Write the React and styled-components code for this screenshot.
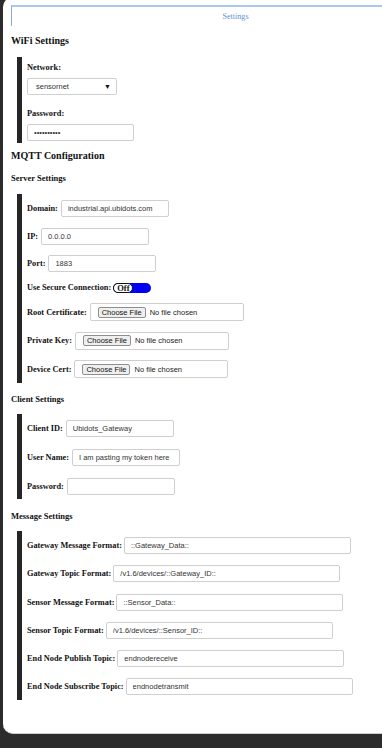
import React from "react";
import styled, { createGlobalStyle } from "styled-components";

const Global = createGlobalStyle`
  html, body { margin: 0; padding: 0; background: #2c2c2c; overflow: hidden; }
  #root { width: 382px; height: 748px; overflow: hidden; }
`;

const Card = styled.div`
  box-sizing: border-box;
  margin: -3px 0 0 3px;
  width: 460px;
  height: 737px;
  background: #fff;
  border-radius: 10px;
  border-bottom: 1px solid #cfcfcf;
  padding: 8px 0 0 8px;
  font-family: "Liberation Serif", "Times New Roman", serif;
  color: #111;
`;

const Tab = styled.div`
  box-sizing: border-box;
  width: 448px;
  height: 21px;
  border-top: 2px solid #a8c8ee;
  border-left: 1px solid #86acdc;
  color: #5f92d6;
  font-size: 8.1px;
  display: flex;
  align-items: center;
  justify-content: center;
`;

const Heading = styled.div`
  font-weight: bold;
  font-size: ${(p) => (p.$small ? "8.5px" : "10px")};
  line-height: 12px;
  height: 12px;
  margin-top: ${(p) => p.$mt}px;
`;

const Block = styled.div`
  margin: ${(p) => p.$mt}px 0 0 6px;
  border-left: 5px solid #262626;
  padding: ${(p) => p.$pt}px 0 ${(p) => p.$pb}px 5px;
  display: flex;
  flex-direction: column;
  gap: ${(p) => p.$gap}px;
`;

const StackLabel = styled.div`
  font-weight: bold;
  font-size: 8.4px;
  line-height: 12px;
  height: 12px;
  margin-bottom: 4px;
`;

const Field = styled.div`
  display: flex;
  flex-direction: column;
`;

const Row = styled.div`
  display: flex;
  align-items: center;
  height: ${(p) => p.$h || 17}px;
`;

const Label = styled.span`
  font-weight: bold;
  font-size: 8.3px;
  white-space: nowrap;
  margin-right: ${(p) => p.$gap ?? 3}px;
`;

const TextInput = styled.input`
  box-sizing: border-box;
  width: ${(p) => p.$w}px;
  height: 17px;
  border: 1px solid #cfcfcf;
  border-radius: 2px;
  padding: 0 0 0 6px;
  margin: 0;
  font-family: "Liberation Sans", Arial, sans-serif;
  font-size: 7.5px;
  color: #333;
  background: #fff;
  outline: none;
`;

const SelectBox = styled.div`
  box-sizing: border-box;
  width: 90px;
  height: 17px;
  border: 1px solid #cfcfcf;
  border-radius: 2px;
  padding: 0 5px 0 8px;
  display: flex;
  align-items: center;
  justify-content: space-between;
  font-family: "Liberation Sans", Arial, sans-serif;
  font-size: 7.5px;
  color: #333;
`;

const Arrow = styled.span`
  font-size: 7px;
  color: #111;
`;

const FileBox = styled.div`
  box-sizing: border-box;
  width: 154px;
  height: 18px;
  border: 1px solid #cfcfcf;
  border-radius: 2px;
  padding: 0 0 0 7px;
  display: flex;
  align-items: center;
  gap: 4px;
  font-family: "Liberation Sans", Arial, sans-serif;
  font-size: 7.5px;
  color: #222;
`;

const FileButton = styled.span`
  box-sizing: border-box;
  height: 11px;
  padding: 0 3px;
  display: flex;
  align-items: center;
  background: #efefef;
  border: 1px solid #8f8f8f;
  border-radius: 2px;
  color: #111;
`;

const Toggle = styled.span`
  box-sizing: border-box;
  width: 38px;
  height: 10px;
  border-radius: 6px;
  background: #0000f5;
  display: flex;
  align-items: center;
`;

const Knob = styled.span`
  box-sizing: border-box;
  height: 10px;
  padding: 0 3px;
  border-radius: 6px;
  background: #fff;
  border: 1px solid #111;
  font-weight: bold;
  font-size: 8.5px;
  line-height: 8px;
  display: flex;
  align-items: center;
`;

const server = [
  ["Domain:", "industrial.api.ubidots.com"],
  ["IP:", "0.0.0.0"],
  ["Port:", "1883"],
];

const files = ["Root Certificate:", "Private Key:", "Device Cert:"];

const client = [
  ["Client ID:", "Ubidots_Gateway", "text"],
  ["User Name:", "I am pasting my token here", "text"],
  ["Password:", "", "password"],
];

const messages = [
  ["Gateway Message Format:", "::Gateway_Data::"],
  ["Gateway Topic Format:", "/v1.6/devices/::Gateway_ID::"],
  ["Sensor Message Format:", "::Sensor_Data::"],
  ["Sensor Topic Format:", "/v1.6/devices/::Sensor_ID::"],
  ["End Node Publish Topic:", "endnodereceive"],
  ["End Node Subscribe Topic:", "endnodetransmit"],
];

export default function App() {
  return (
    <>
      <Global />
      <Card>
        <Tab>Settings</Tab>
        <Heading $mt={9}>WiFi Settings</Heading>
        <Block $mt={10} $pt={5} $pb={2} $gap={13}>
          <Field>
            <StackLabel>Network:</StackLabel>
            <SelectBox>
              <span>sensornet</span>
              <Arrow>▼</Arrow>
            </SelectBox>
          </Field>
          <Field>
            <StackLabel>Password:</StackLabel>
            <TextInput $w={107} type="password" value="password12" readOnly />
          </Field>
        </Block>

        <Heading $mt={7}>MQTT Configuration</Heading>
        <Heading $small $mt={10}>Server Settings</Heading>
        <Block $mt={10} $pt={6} $pb={5} $gap={10.5}>
          {server.map(([l, v]) => (
            <Row key={l}>
              <Label>{l}</Label>
              <TextInput $w={108} value={v} readOnly />
            </Row>
          ))}
          <Row $h={10}>
            <Label $gap={2}>Use Secure Connection:</Label>
            <Toggle>
              <Knob>Off</Knob>
            </Toggle>
          </Row>
          {files.map((l) => (
            <Row key={l} $h={18}>
              <Label>{l}</Label>
              <FileBox>
                <FileButton>Choose File</FileButton>
                <span>No file chosen</span>
              </FileBox>
            </Row>
          ))}
        </Block>

        <Heading $small $mt={10}>Client Settings</Heading>
        <Block $mt={9} $pt={6} $pb={4} $gap={12}>
          {client.map(([l, v, t]) => (
            <Row key={l}>
              <Label>{l}</Label>
              <TextInput $w={108} type={t} value={v} readOnly />
            </Row>
          ))}
        </Block>

        <Heading $small $mt={11}>Message Settings</Heading>
        <Block $mt={9} $pt={6} $pb={5} $gap={11.3}>
          {messages.map(([l, v]) => (
            <Row key={l}>
              <Label $gap={2}>{l}</Label>
              <TextInput $w={227} value={v} readOnly />
            </Row>
          ))}
        </Block>
      </Card>
    </>
  );
}
